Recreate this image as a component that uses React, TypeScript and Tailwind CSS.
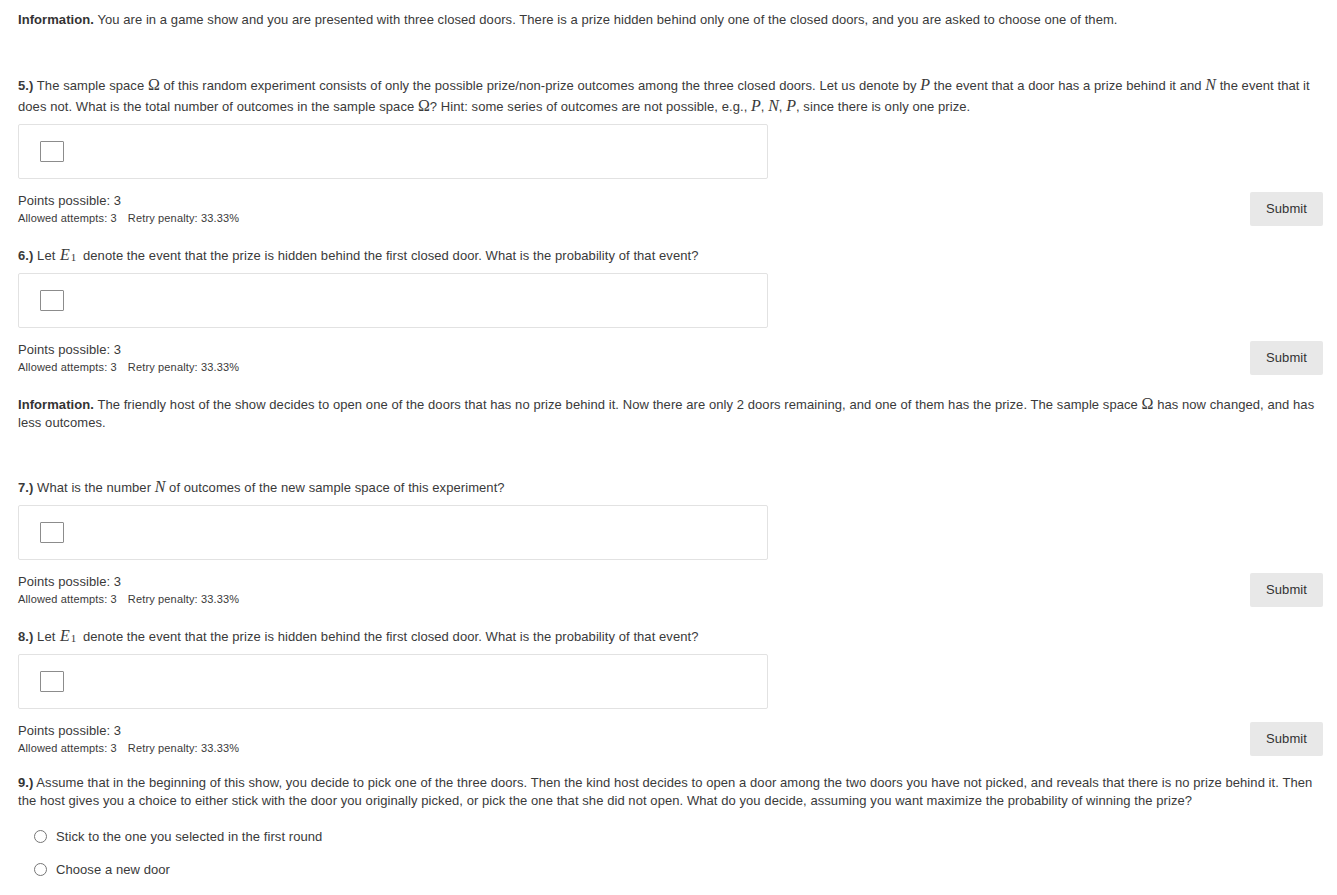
import React from 'react';

// inline math bits, serif like the typeset formulas
const M: React.FC<{ children: React.ReactNode; upright?: boolean }> = ({ children, upright }) => (
  <span className={`font-['Liberation_Serif',serif] text-[16px] leading-none tracking-normal ${upright ? '' : 'italic'}`}>
    {children}
  </span>
);

const Omega = () => <M upright>Ω</M>;

const E1 = () => (
  <span className="font-['Liberation_Serif',serif] text-[16px] leading-none tracking-normal mx-[1px]">
    <span className="italic">E</span>
    <sub className="text-[11px] relative top-[1px] ml-[1px] mr-[2px]">1</sub>
  </span>
);

const AnswerBox = () => (
  <div className="mt-[7px] w-[750px] h-[55px] border border-[#e2e2e2] rounded-[2px] flex items-center pl-[21px] bg-white">
    <div className="w-[24px] h-[21px] border border-[#8c8c8c] rounded-[1px] bg-white" />
  </div>
);

const PointsRow = () => (
  <div className="mt-[11px] flex items-center justify-between">
    <div>
      <div className="text-[13px] leading-[21px]">Points possible: 3</div>
      <div className="text-[11px] leading-[15px] tracking-[0.15px]">
        Allowed attempts: 3<span className="inline-block w-[11px]" />Retry penalty: 33.33%
      </div>
    </div>
    <button className="mt-[2px] h-[34px] w-[73px] bg-[#e8e8e8] rounded-[2px] text-[13px] text-[#333]">Submit</button>
  </div>
);

const Question: React.FC<{ n: string; children: React.ReactNode; className?: string }> = ({ n, children, className }) => (
  <div className={className}>
    <p className="text-[13px] leading-[21px]">
      <b className="font-bold">{n}</b> {children}
    </p>
    <AnswerBox />
    <PointsRow />
  </div>
);

export default function App() {
  return (
    <div className="min-h-screen bg-white font-['Liberation_Sans',Arial,sans-serif] text-[#3a3a3a] tracking-[0.07px] pl-[18px] pr-[14px] pt-[9px] pb-8">
      <p className="text-[13px] leading-[21px]">
        <b className="font-bold text-[#333]">Information.</b> You are in a game show and you are presented with three closed doors. There is a prize hidden behind only one of the closed doors, and you are asked to choose one of them.
      </p>

      <Question n="5.)" className="mt-[45px]">
        The sample space <Omega /> of this random experiment consists of only the possible prize/non-prize outcomes among the three closed doors. Let us denote by <M>P</M> the event that a door has a prize behind it and <M>N</M> the event that it does not. What is the total number of outcomes in the sample space <Omega />? Hint: some series of outcomes are not possible, e.g., <M>P</M>, <M>N</M>, <M>P</M>, since there is only one prize.
      </Question>

      <Question n="6.)" className="mt-[19px]">
        Let <E1 /> denote the event that the prize is hidden behind the first closed door. What is the probability of that event?
      </Question>

      <p className="mt-[21px] text-[13px] leading-[18px]">
        <b className="font-bold text-[#333]">Information.</b> The friendly host of the show decides to open one of the doors that has no prize behind it. Now there are only 2 doors remaining, and one of them has the prize. The sample space <Omega /> has now changed, and has less outcomes.
      </p>

      <Question n="7.)" className="mt-[45px]">
        What is the number <M>N</M> of outcomes of the new sample space of this experiment?
      </Question>

      <Question n="8.)" className="mt-[19px]">
        Let <E1 /> denote the event that the prize is hidden behind the first closed door. What is the probability of that event?
      </Question>

      <div className="mt-[18px]">
        <p className="text-[13px] leading-[18px]">
          <b className="font-bold text-[#333]">9.)</b> Assume that in the beginning of this show, you decide to pick one of the three doors. Then the kind host decides to open a door among the two doors you have not picked, and reveals that there is no prize behind it. Then the host gives you a choice to either stick with the door you originally picked, or pick the one that she did not open. What do you decide, assuming you want maximize the probability of winning the prize?
        </p>
        <div className="mt-[16px] pl-[16px] flex flex-col gap-[12px]">
          {['Stick to the one you selected in the first round', 'Choose a new door'].map((t) => (
            <label key={t} className="flex items-center h-[21px] text-[13px]">
              <span className="w-[13px] h-[13px] rounded-full border border-[#767676] bg-white" />
              <span className="ml-[9px]">{t}</span>
            </label>
          ))}
        </div>
      </div>
    </div>
  );
}
